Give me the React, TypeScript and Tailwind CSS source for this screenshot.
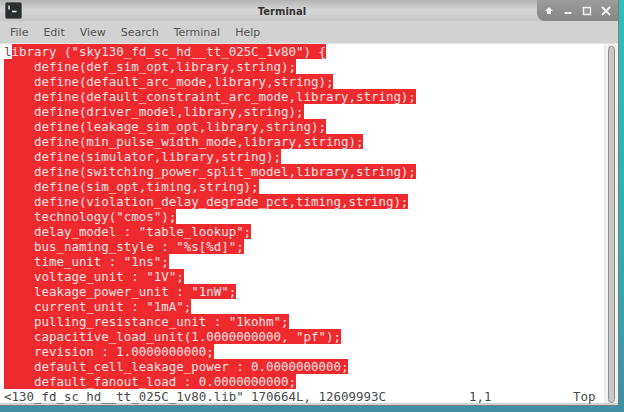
const lines = [
  'library ("sky130_fd_sc_hd__tt_025C_1v80") {',
  '    define(def_sim_opt,library,string);',
  '    define(default_arc_mode,library,string);',
  '    define(default_constraint_arc_mode,library,string);',
  '    define(driver_model,library,string);',
  '    define(leakage_sim_opt,library,string);',
  '    define(min_pulse_width_mode,library,string);',
  '    define(simulator,library,string);',
  '    define(switching_power_split_model,library,string);',
  '    define(sim_opt,timing,string);',
  '    define(violation_delay_degrade_pct,timing,string);',
  '    technology("cmos");',
  '    delay_model : "table_lookup";',
  '    bus_naming_style : "%s[%d]";',
  '    time_unit : "1ns";',
  '    voltage_unit : "1V";',
  '    leakage_power_unit : "1nW";',
  '    current_unit : "1mA";',
  '    pulling_resistance_unit : "1kohm";',
  '    capacitive_load_unit(1.0000000000, "pf");',
  '    revision : 1.0000000000;',
  '    default_cell_leakage_power : 0.0000000000;',
  '    default_fanout_load : 0.0000000000;',
];

const menus = ['File', 'Edit', 'View', 'Search', 'Terminal', 'Help'];

export default function App() {
  return (
    <div className="h-[412px] w-[624px] overflow-hidden bg-gradient-to-b from-[#2fc0bb] via-[#2ab5b4] to-[#3f8fa6]">
      <div className="flex h-[406px] w-[619px] flex-col bg-[#d2d2d2] font-['DejaVu_Sans'] border-r border-b border-[#7c7c7c]">
        {/* title bar */}
        <div className="flex h-[21px] shrink-0 bg-gradient-to-b from-[#b4b4b4] via-[#d6d6d6] to-[#c6c6c6]">
          <div className="ml-[5px] mt-[2px] h-[17px] w-[17px] shrink-0 rounded-[2px] border border-[#666] bg-[#2b2e2e]">
            <svg width="15" height="15" viewBox="0 0 15 15">
              <path d="M3 2.5V6.5" stroke="#d8d8d8" strokeWidth="1.6" />
              <path d="M6 8.5H10.5" stroke="#e8e8e8" strokeWidth="1.6" />
            </svg>
          </div>
          <div className="flex-1 pt-[4px] pl-[5px] text-center text-[10px] font-bold leading-[16px] text-[#333]">Terminal</div>
          <div className="flex h-[21px] w-[81px] items-center justify-around rounded-bl-[8px] bg-gradient-to-b from-[#9c9c9c] to-[#858585] px-[3px]">
            <svg width="10" height="10" viewBox="0 0 10 10"><path d="M5 1 9 5H7V8H3V5H1Z" fill="#f2f2f2" /></svg>
            <svg width="10" height="10" viewBox="0 0 10 10"><path d="M1.5 7H8.5" stroke="#f2f2f2" strokeWidth="2" /></svg>
            <svg width="10" height="10" viewBox="0 0 10 10"><path d="M1.5 1.5H8.5V8.5H1.5Z" fill="#9a9a9a" stroke="#f2f2f2" strokeWidth="1.4" /></svg>
            <svg width="10" height="10" viewBox="0 0 10 10"><path d="M1 1 9 9M9 1 1 9" stroke="#f2f2f2" strokeWidth="2" /></svg>
          </div>
        </div>
        {/* menu bar */}
        <div className="flex h-[22px] shrink-0 items-center gap-[15px] pl-[10px] pt-[2px] text-[11px] text-[#555]">
          {menus.map((m) => (
            <span key={m}>{m}</span>
          ))}
        </div>
        {/* terminal body */}
        <div className="mb-[2px] flex min-h-0 flex-1 border-t border-[#e4e4e4] bg-white">
          <div className="min-w-0 flex-1 pl-[4px] font-['DejaVu_Sans_Mono'] text-[12.45px] leading-[15px] text-[#fbe3e3]">
            {lines.map((line, i) => (
              <div key={i} className="h-[15px] whitespace-pre">
                <span className="bg-[#ee2a2e]">
                  {i === 0 ? (
                    <>
                      <span className="bg-white text-[#555]">l</span>
                      {line.slice(1)}
                    </>
                  ) : (
                    line
                  )}
                </span>
              </div>
            ))}
            <div className="flex h-[15px] whitespace-pre text-[#4a4a4a]">
              <span className="w-[465px] shrink-0">{'<130_fd_sc_hd__tt_025C_1v80.lib" 170664L, 12609993C'}</span>
              <span className="w-[104px] shrink-0">1,1</span>
              <span>Top</span>
            </div>
          </div>
          <div className="flex w-[14px] shrink-0 justify-center border-l border-[#e6e6e6] bg-[#f1f1f1] pt-[2px]">
            <div className="w-[7px] rounded-full border border-[#8c8c8c] bg-[#c8c8c8]" />
          </div>
        </div>
      </div>
    </div>
  );
}
